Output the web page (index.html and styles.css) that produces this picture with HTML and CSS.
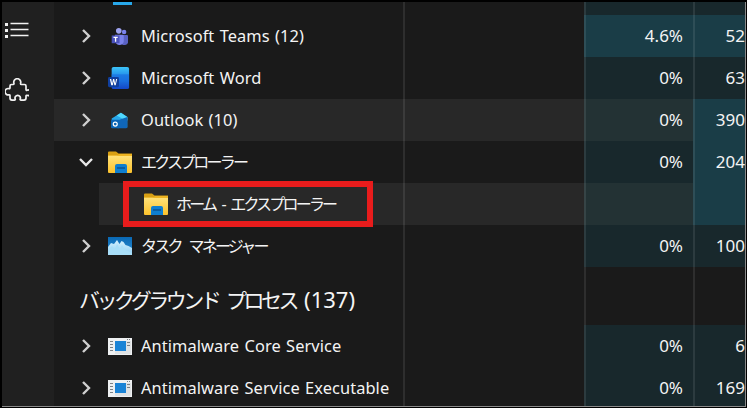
FILE: index.html
```html
<!DOCTYPE html>
<html lang="ja">
<head>
<meta charset="utf-8">
<title>タスク マネージャー</title>
<link rel="stylesheet" href="styles.css">
</head>
<body>
<svg class="defs" width="0" height="0" aria-hidden="true">
  <defs>
    <linearGradient id="fold" x1="0" y1="0" x2="0" y2="1"><stop offset="0" stop-color="#ffe27a"/><stop offset="1" stop-color="#fcc22c"/></linearGradient>
    <linearGradient id="wordg" x1="0" y1="0" x2="0" y2="1"><stop offset="0" stop-color="#3cc4f8"/><stop offset="0.5" stop-color="#1c7fe6"/><stop offset="1" stop-color="#1446c8"/></linearGradient>
    <linearGradient id="taskg" x1="0" y1="0" x2="0" y2="1"><stop offset="0" stop-color="#0a69b4"/><stop offset="1" stop-color="#2b8fd6"/></linearGradient>
    <linearGradient id="taskw" x1="0" y1="0" x2="0" y2="1"><stop offset="0" stop-color="#d4f0fd"/><stop offset="1" stop-color="#8fd0f5"/></linearGradient>
    <symbol id="chev-r" viewBox="0 0 16 16"><path d="M4 2l6 6-6 6" fill="none" stroke="#cfcfcf" stroke-width="2.400"/></symbol>
    <symbol id="chev-d" viewBox="0 0 16 16"><path d="M1 5l6 6 6-6" fill="none" stroke="#e8e8e8" stroke-width="2.400"/></symbol>
    <symbol id="folder" viewBox="0 0 24 22">
      <path d="M0 1.500a1 1 0 0 1 1-1h7l2.500 2H24V6H0z" fill="#d9a013"/>
      <path d="M0 4.500h24V21a1 1 0 0 1-1 1H1a1 1 0 0 1-1-1z" fill="url(#fold)"/>
      <path d="M0 4.500h9l2-1.500h13v2H0z" fill="#eeb421"/>
      <path d="M7 22v-7a2 2 0 0 1 2-2h8a2 2 0 0 1 2 2v7z" fill="#0f7fd0"/>
      <path d="M9 16.500h8v1H9z" fill="#083f74"/>
    </symbol>
    <symbol id="service" viewBox="0 0 24 17">
      <path d="M0 0h24v17H0z" fill="#eef0f2"/>
      <path d="M18 3h5v13H7v-3h11z" fill="#dfe2e4"/>
      <path d="M7 3h11v10H7z" fill="#1a83d6"/>
      <path d="M2 3h3v1H2zM2 6h3v1H2zM2 9h3v1H2zM2 12h3v1H2zM19 1h1v1h-1zM21 1h1v1h-1zM19 4h3v1h-3zM19 7h3v1h-3z" fill="#7b8186"/>
    </symbol>
  </defs>
</svg>
<div class="app">
  <aside class="sidebar">
    <svg class="side-menu" width="24" height="16" viewBox="0 0 24 16" aria-hidden="true">
      <path d="M0 1h3v3H0zM0 7h3v3H0zM0 13h3v3H0z" fill="#f2f2f2"/>
      <path d="M5.500 1.500h18M5.500 7.500h18M5.500 13.500h18" stroke="#f2f2f2" stroke-width="1.600"/>
    </svg>
    <svg class="side-puzzle" width="24" height="24" viewBox="0 0 24 24" aria-hidden="true">
      <path d="M9 5.500a3.500 3.500 0 1 1 6.500 0c0 .7.400 1 1 1h3a1.500 1.500 0 0 1 1.500 1.500v3.500c0 .7.500 1 1 .8a2.800 2.800 0 1 1 0 5c-.5-.2-1 .1-1 .8v2a2 2 0 0 1-2 2h-3c-.7 0-1-.5-.8-1a2.700 2.700 0 1 0-5 0c.2.500-.1 1-.8 1H7a2 2 0 0 1-2-2v-2.500c0-.7-.4-1-1-.8a3.200 3.200 0 1 1 0-6.200c.6.200 1-.1 1-.8V8a1.500 1.500 0 0 1 1.500-1.500H8c.6 0 1-.3 1-1z" fill="none" stroke="#f2f2f2" stroke-width="1.700"/>
    </svg>
  </aside>
  <main class="table">
    <div class="row row-stub">
      <div class="name"><span class="stub-icon"></span></div>
      <div class="blank"></div>
      <div class="num cpu"></div>
      <div class="num mem"></div>
    </div>
    <div class="row">
      <div class="name">
        <svg class="chev"><use href="#chev-r"/></svg>
        <svg class="icon icon-small" viewBox="0 0 24 24" aria-hidden="true">
          <circle cx="18.500" cy="5.500" r="3.200" fill="#7b83eb"/>
          <path d="M13 10h9.500a1.500 1.500 0 0 1 1.500 1.500V18a5 5 0 0 1-10 2z" fill="#5a62c3"/>
          <circle cx="11" cy="4" r="4" fill="#9ea3f0"/>
          <path d="M5.500 9.500h11a1.500 1.500 0 0 1 1.500 1.500v8a6.200 6.200 0 0 1-12 .5z" fill="#7b83eb"/>
          <path d="M1 10.500h11v11H1z" fill="#4b53bc"/>
          <path d="M3.500 12.500h6v1.700H7.400V19.500H5.600v-5.300H3.500z" fill="#fff"/>
        </svg>
        <span class="label">Microsoft Teams (12)</span>
      </div>
      <div class="blank"></div>
      <div class="num cpu hot">4.6%</div>
      <div class="num mem hot">52</div>
    </div>
    <div class="row">
      <div class="name">
        <svg class="chev"><use href="#chev-r"/></svg>
        <svg class="icon" viewBox="0 0 23 24" preserveAspectRatio="xMinYMid meet" aria-hidden="true">
          <path d="M4 2a2 2 0 0 1 2-2h15a2 2 0 0 1 2 2v20a2 2 0 0 1-2 2H6a2 2 0 0 1-2-2z" fill="url(#wordg)"/>
          <path d="M4 8h19v8H4z" fill="#1a6fe0" opacity=".7"/>
          <rect x="0" y="11" width="12" height="11" rx="1.500" fill="#103f9e"/>
          <path d="M2 13h1.500l1 5 1-5h1.300l1 5 1-5H10l-1.600 7H7l-.9-4.500-.9 4.500H3.600z" fill="#fff"/>
        </svg>
        <span class="label">Microsoft Word</span>
      </div>
      <div class="blank"></div>
      <div class="num cpu">0%</div>
      <div class="num mem">63</div>
    </div>
    <div class="row hover">
      <div class="name">
        <svg class="chev"><use href="#chev-r"/></svg>
        <svg class="icon icon-small" viewBox="0 0 24 24" aria-hidden="true">
          <path d="M1 9l13-8 9 6v15H1z" fill="#28a8ea"/>
          <path d="M8 5l6-4 9 6v5l-6-2z" fill="#50d9ff"/>
          <path d="M9 12l14-5v14a2 2 0 0 1-2 2H9z" fill="#1066b8"/>
          <rect x="0" y="11" width="12" height="12" rx="1.500" fill="#0a64b4"/>
          <circle cx="6" cy="17" r="2.800" fill="none" stroke="#fff" stroke-width="1.700"/>
        </svg>
        <span class="label">Outlook (10)</span>
      </div>
      <div class="blank"></div>
      <div class="num cpu">0%</div>
      <div class="num mem hot">390</div>
    </div>
    <div class="row">
      <div class="name">
        <svg class="chev"><use href="#chev-d"/></svg>
        <svg class="icon"><use href="#folder"/></svg>
        <span class="label ja">エクスプローラー</span>
      </div>
      <div class="blank"></div>
      <div class="num cpu">0%</div>
      <div class="num mem hot">204</div>
    </div>
    <div class="row hover row-child">
      <div class="name">
        <svg class="icon"><use href="#folder"/></svg>
        <span class="label ja ja-title">ホーム - エクスプローラー</span>
        <span class="callout"></span>
      </div>
      <div class="blank"></div>
      <div class="num cpu"></div>
      <div class="num mem hot"></div>
    </div>
    <div class="row">
      <div class="name">
        <svg class="chev"><use href="#chev-r"/></svg>
        <svg class="icon icon-task" viewBox="0 0 24 18" aria-hidden="true">
          <path d="M0 0h24v18H0z" fill="url(#taskg)"/>
          <path d="M0 10l3-4 3 1 3-4 2.500 4 2-3 2 1 2 3 3 1 3.500 2v7H0z" fill="url(#taskw)"/>
          <path d="M0 13l4-4 3 3 2-5 3 5 2-4 3 5 3 1 4 2v2H0z" fill="#a8def8"/>
        </svg>
        <span class="label ja">タスク マネージャー</span>
      </div>
      <div class="blank"></div>
      <div class="num cpu">0%</div>
      <div class="num mem">100</div>
    </div>
    <div class="row row-heading">
      <div class="name"><h2 class="heading">バックグラウンド プロセス <span class="heading-count">(137)</span></h2></div>
      <div class="blank"></div>
      <div class="num"></div>
      <div class="num"></div>
    </div>
    <div class="row">
      <div class="name">
        <svg class="chev"><use href="#chev-r"/></svg>
        <svg class="icon icon-service"><use href="#service"/></svg>
        <span class="label">Antimalware Core Service</span>
      </div>
      <div class="blank"></div>
      <div class="num cpu">0%</div>
      <div class="num mem">6</div>
    </div>
    <div class="row">
      <div class="name">
        <svg class="chev"><use href="#chev-r"/></svg>
        <svg class="icon icon-service"><use href="#service"/></svg>
        <span class="label">Antimalware Service Executable</span>
      </div>
      <div class="blank"></div>
      <div class="num cpu">0%</div>
      <div class="num mem">169</div>
    </div>
  </main>
</div>
</body>
</html>
```
FILE: styles.css
```css
* { box-sizing: border-box; }
html, body { margin: 0; height: 100%; }
body {
  background: #000;
  padding: 2px 1px 1px 2px;
  overflow: hidden;
  font-family: "Noto Sans", "Noto Sans CJK JP", sans-serif;
  color: #f4f4f4;
}
.defs { position: absolute; }
.app {
  display: flex;
  height: 405px;
  border-right: 1px solid #8a8a8a;
  border-bottom: 1px solid #8a8a8a;
  background: #1a1a1a;
  overflow: hidden;
}
.sidebar {
  flex: 0 0 52px;
  background: #202020;
  display: flex;
  flex-direction: column;
  align-items: flex-start;
  padding: 20px 0 0 3px;
}
.side-puzzle { margin-top: 40px; }
.table { flex: 1; min-width: 0; display: flex; flex-direction: column; }
.row {
  flex: 0 0 42px;
  display: grid;
  grid-template-columns: 349px 181px 109px 52px;
}
.row-stub { flex-basis: 13px; }
.row-heading { flex-basis: 58px; }
.name {
  display: flex;
  align-items: center;
  padding-left: 25px;
  white-space: nowrap;
  position: relative;
  min-width: 0;
}
.stub-icon {
  width: 19px;
  height: 3px;
  margin: 0 0 auto 34px;
  background: #28a8ea;
}
.chev { width: 16px; height: 16px; flex: none; }
.icon { width: 24px; height: 22px; flex: none; margin-left: 13px; }
.icon-small { width: 17px; height: 17px; margin-left: 16px; margin-right: 4px; }
.icon-task { height: 18px; }
.icon-service { height: 17px; }
.label {
  margin-left: 9px;
  font-size: 16.400px;
  letter-spacing: .08px;
  word-spacing: 1px;
  line-height: 22px;
}
.ja {
  font-size: 16px;
  letter-spacing: -2.800px;
  word-spacing: 6.600px;
}
.ja-title { word-spacing: 5px; margin-left: 8px; }
.heading {
  margin: 0;
  padding-top: 6px;
  font-size: 21px;
  font-weight: 400;
  line-height: 26px;
  letter-spacing: -3.500px;
  word-spacing: 6px;
}
.heading-count { font-size: 22px; letter-spacing: 0; }
.blank, .num { border-left: 2px solid rgba(255, 255, 255, .09); }
.num {
  display: flex;
  align-items: center;
  justify-content: flex-end;
  padding: 0 10px 2px 0;
  font-size: 17px;
  white-space: nowrap;
  overflow: hidden;
}
.mem { padding-right: 0; }
.cpu, .mem { background: #18282c; }
.hot { background: #1a3d47; }
.hover .name, .hover .blank { background: #282828; }
.hover .cpu { background: #233234; }
.hover .mem.hot { background: #1a3d47; }
.row-child .name { margin-left: 45px; padding-left: 45px; }
.row-child .icon { margin-left: 0; }
.callout {
  position: absolute;
  left: 24px;
  top: -2px;
  width: 250px;
  height: 46px;
  border: 6px solid #e81c1c;
}
```
